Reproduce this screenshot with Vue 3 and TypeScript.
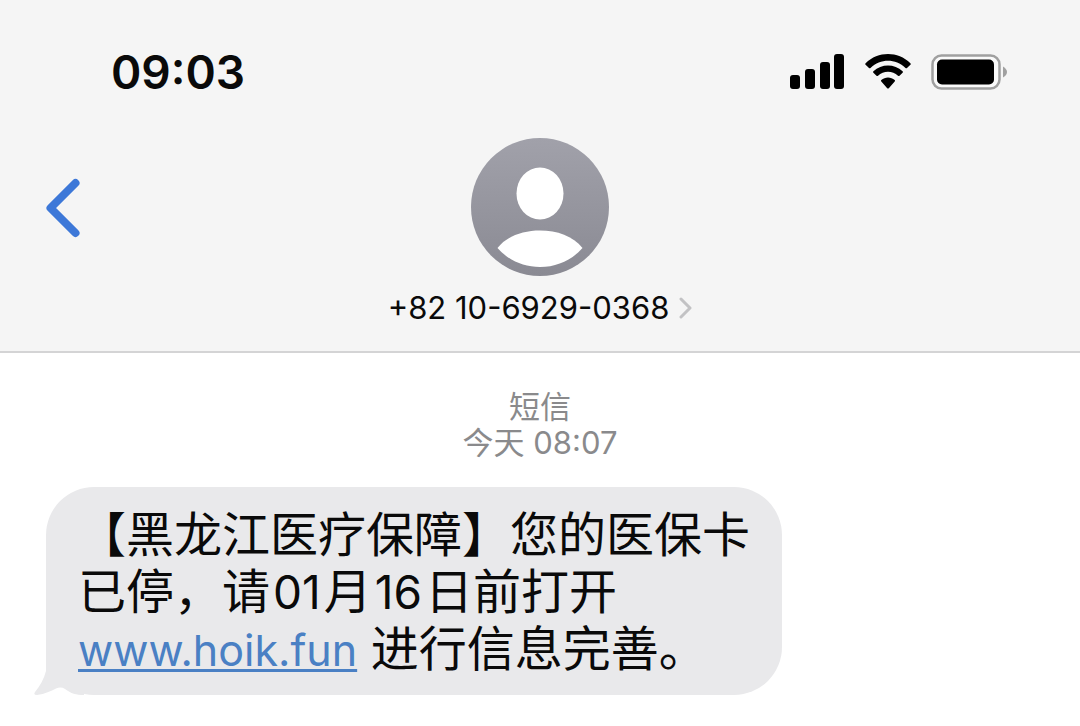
<script setup lang="ts">
interface Segment {
  kind: 'text' | 'digits' | 'link'
  value: string
}

const clock = '09:03'
const sender = '+82 10-6929-0368'
const channel = '短信'
const sentAt = '今天 08:07'
const lines: Segment[][] = [
  [{ kind: 'text', value: '【黑龙江医疗保障】您的医保卡' }],
  [
    { kind: 'text', value: '已停，请' },
    { kind: 'digits', value: '01' },
    { kind: 'text', value: '月' },
    { kind: 'digits', value: '16' },
    { kind: 'text', value: '日前打开' },
  ],
  [
    { kind: 'link', value: 'www.hoik.fun' },
    { kind: 'text', value: ' 进行信息完善。' },
  ],
]
</script>

<template>
  <main class="screen">
    <header class="top">
      <div class="status">
        <time class="clock">{{ clock }}</time>
        <div class="indicators">
          <svg width="55" height="36" viewBox="0 0 55 36" role="img" aria-label="Signal">
            <rect x="0" y="21" width="10" height="14" rx="3" />
            <rect x="15" y="15" width="10" height="20" rx="3" />
            <rect x="30" y="8" width="10" height="27" rx="3" />
            <rect x="44" y="0" width="10" height="35" rx="3" />
          </svg>
          <svg width="46" height="36" viewBox="0 0 46 36" role="img" aria-label="Wi-Fi">
            <path d="M0.6 9.2C13 -3 33 -3 45.4 9.2Q46.2 10 45.4 10.8L42 14Q41.3 14.6 40.5 13.9C30.5 4.5 15.5 4.5 5.5 13.9Q4.7 14.6 4 14L0.6 10.8Q-0.2 10 0.6 9.2Z" />
            <path d="M8.4 17.2C16.5 9.7 29.5 9.7 37.6 17.2Q38.4 18 37.6 18.8L34.5 21.8Q33.8 22.4 33 21.7C27.5 16.4 18.5 16.4 13 21.7Q12.2 22.4 11.5 21.8L8.4 18.8Q7.6 18 8.4 17.2Z" />
            <path d="M16.3 26C20.2 22.6 25.8 22.6 29.7 26Q30.5 26.8 29.7 27.6L23.8 34.2Q23 35 22.2 34.2L16.3 27.6Q15.5 26.8 16.3 26Z" />
          </svg>
          <svg width="77" height="36" viewBox="0 0 77 36" role="img" aria-label="Battery">
            <rect x="1.5" y="1.5" width="67" height="33" rx="9" fill="#fafafa" stroke="#a0a0a0" stroke-width="2.5" />
            <rect x="6" y="5.5" width="57" height="25" rx="5" />
            <path d="M72 12.5Q76 15 76 18T72 23.5Z" fill="#a0a0a0" />
          </svg>
        </div>
      </div>
      <div class="contact-row">
        <button class="back" type="button" aria-label="返回">
          <svg width="36" height="60" viewBox="0 0 36 60">
            <path d="M30.5 5L5.5 30L30.5 55" fill="none" stroke="#3d78d8" stroke-width="8" stroke-linecap="round" stroke-linejoin="round" />
          </svg>
        </button>
        <button class="contact" type="button">
          <svg width="138" height="138" viewBox="0 0 138 138" aria-hidden="true">
            <defs>
              <linearGradient id="avatar-fill" x1="0" y1="0" x2="0" y2="1">
                <stop offset="0" stop-color="#a1a1aa" />
                <stop offset="1" stop-color="#8a8a93" />
              </linearGradient>
            </defs>
            <circle cx="69" cy="69" r="69" fill="url(#avatar-fill)" />
            <ellipse cx="69" cy="55.5" rx="23.5" ry="26" fill="#fff" />
            <path d="M26.5 110C36 98 52 92.5 69 92.5S102 98 111.5 110C101 122 86 129 69 129S37 122 26.5 110Z" fill="#fff" />
          </svg>
          <span class="name">
            {{ sender }}
            <svg width="13" height="22" viewBox="0 0 13 22" aria-hidden="true">
              <path d="M2 2L11 11L2 20" fill="none" stroke="#c2c2c4" stroke-width="3" stroke-linecap="round" stroke-linejoin="round" />
            </svg>
          </span>
        </button>
      </div>
    </header>

    <section class="thread">
      <div class="meta">
        <span>{{ channel }}</span>
        <time>{{ sentAt }}</time>
      </div>
      <article class="bubble">
        <svg class="tail" width="50" height="50" viewBox="0 0 50 50" aria-hidden="true">
          <path d="M12 0V26C10 34 6 41 1 47Q-1 50 3 50C11 49 17 46 22 43.5Q27 41.5 31 44C37 48.500 42 50 50 50V0Z" fill="#e9e9eb" />
        </svg>
        <p class="text">
          <template v-for="(line, row) in lines" :key="row">
            <br v-if="row > 0" />
            <template v-for="part in line" :key="part.value">
              <a v-if="part.kind === 'link'" href="#">{{ part.value }}</a>
              <span v-else :class="part.kind">{{ part.value }}</span>
            </template>
          </template>
        </p>
      </article>
    </section>
  </main>
</template>

<style>
body {
  margin: 0;
  background: #fff;
}
</style>

<style scoped>
.screen {
  min-height: 100vh;
  background: #fff;
  color: #0a0a0a;
  font-family: Inter, "Noto Sans CJK SC", sans-serif;
}

.top {
  box-sizing: border-box;
  padding: 44px 45px 25px;
  background: #f5f5f5;
  border-bottom: 2px solid #d4d4d5;
}

.status {
  display: flex;
  align-items: center;
  justify-content: space-between;
  padding: 0 27px 0 66px;
}

.clock {
  font-size: 46px;
  line-height: 56px;
  font-weight: 600;
}

.indicators {
  display: flex;
  align-items: center;
  gap: 20px;
  color: #000;
}

.contact-row {
  display: grid;
  grid-template-columns: 1fr auto 1fr;
  align-items: start;
  margin-top: 38px;
}

button {
  padding: 0;
  border: 0;
  background: none;
  color: inherit;
  font: inherit;
  cursor: pointer;
}

.back {
  display: flex;
  justify-self: start;
  margin-top: 40px;
}

.contact {
  display: flex;
  flex-direction: column;
  align-items: center;
  gap: 14px;
}

.name {
  display: flex;
  align-items: center;
  gap: 10px;
  font-size: 31px;
  line-height: 36px;
}

.thread {
  padding: 36px 46px 30px;
}

.meta {
  display: flex;
  flex-direction: column;
  align-items: center;
  color: #8a8a8c;
  font-size: 31px;
  line-height: 36px;
}

.bubble {
  position: relative;
  box-sizing: border-box;
  width: fit-content;
  max-width: 100%;
  margin-top: 26px;
  padding: 19px 32px 18px;
  border-radius: 48px;
  background: #e9e9eb;
}

.tail {
  position: absolute;
  left: -12px;
  bottom: 0;
}

.text {
  position: relative;
  margin: 0;
  font-size: 48px;
  line-height: 57px;
}

.digits {
  margin: 0 3px;
  font-size: 46px;
  line-height: 1;
}

a {
  color: #4a80c4;
  font-size: 43px;
  line-height: 1;
  text-decoration-thickness: 3px;
  text-underline-offset: 3px;
}
</style>
